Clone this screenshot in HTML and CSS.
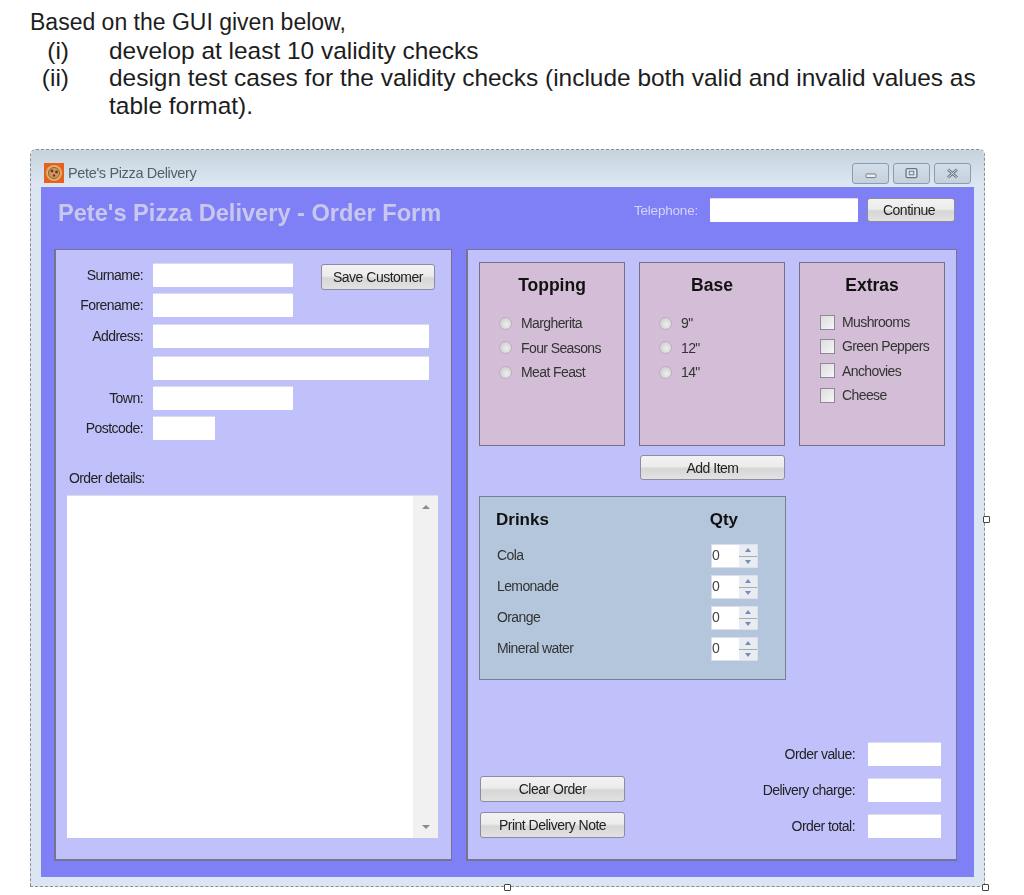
FILE: index.html
```html
<!DOCTYPE html>
<html lang="en">
<head>
<meta charset="utf-8">
<title>Pete's Pizza Delivery</title>
<link rel="stylesheet" href="styles.css">
</head>
<body>
<section class="question">
  <p class="intro">Based on the GUI given below,</p>
  <ol class="tasks">
    <li class="task"><span class="marker">(i)</span><span>develop at least 10 validity checks</span></li>
    <li class="task"><span class="marker">(ii)</span><span>design test cases for the validity checks (include both valid and invalid values as table format).</span></li>
  </ol>
</section>

<div class="window">
  <div class="titlebar">
    <svg class="app-icon" viewBox="0 0 20 20" aria-hidden="true">
      <rect width="20" height="20" fill="#e8601c"/>
      <circle cx="10" cy="10" r="8" fill="#d9b070"/>
      <circle cx="10" cy="10" r="5.5" fill="#c99a62" stroke="#a05a30"/>
      <circle cx="8" cy="8" r="1.4" fill="#8a2a18"/>
      <circle cx="12.5" cy="9" r="1.4" fill="#7a2a18"/>
      <circle cx="10" cy="12.5" r="1.2" fill="#8a2a18"/>
    </svg>
    <span class="window-title">Pete's Pizza Delivery</span>
    <div class="window-controls">
      <span class="win-btn"><svg viewBox="0 0 36 21" aria-hidden="true"><rect x="13" y="11" width="11" height="4" rx="1" fill="#e8eef4" stroke="#68737f"/></svg></span>
      <span class="win-btn"><svg viewBox="0 0 36 21" aria-hidden="true"><rect x="12" y="5" width="12" height="10" rx="1.5" fill="#dfe7ee" stroke="#68737f" stroke-width="1.4"/><rect x="15.500" y="8" width="5" height="4" fill="none" stroke="#68737f"/></svg></span>
      <span class="win-btn"><svg viewBox="0 0 36 21" aria-hidden="true"><path d="M13 6l10 9M23 6l-10 9" stroke="#68737f" stroke-width="3"/><path d="M13 6l10 9M23 6l-10 9" stroke="#eef2f6" stroke-width="1"/></svg></span>
    </div>
  </div>

  <div class="client">
    <header class="form-header">
      <h1 class="form-title">Pete's Pizza Delivery - Order Form</h1>
      <span class="tel-label">Telephone:</span>
      <input class="field tel-field" type="text">
      <button class="btn continue-btn">Continue</button>
    </header>

    <div class="panels">
      <section class="panel customer">
        <div class="customer-grid">
          <label class="lbl">Surname:</label><input class="field w-short" type="text"><button class="btn save-btn">Save Customer</button>
          <label class="lbl">Forename:</label><input class="field w-short wide-cell" type="text">
          <label class="lbl">Address:</label><input class="field w-long wide-cell" type="text">
          <span></span><input class="field w-long wide-cell" type="text">
          <label class="lbl">Town:</label><input class="field w-short wide-cell" type="text">
          <label class="lbl">Postcode:</label><input class="field w-post wide-cell" type="text">
        </div>
        <div class="order-label">Order details:</div>
        <div class="order-box">
          <div class="scrollbar"><span class="arrow-up"></span><span class="arrow-down"></span></div>
        </div>
      </section>

      <section class="panel order">
        <div class="choices">
          <div class="choice-box">
            <h2 class="box-title">Topping</h2>
            <div class="opt"><span class="radio"></span>Margherita</div>
            <div class="opt"><span class="radio"></span>Four Seasons</div>
            <div class="opt"><span class="radio"></span>Meat Feast</div>
          </div>
          <div class="choice-box">
            <h2 class="box-title">Base</h2>
            <div class="opt"><span class="radio"></span>9"</div>
            <div class="opt"><span class="radio"></span>12"</div>
            <div class="opt"><span class="radio"></span>14"</div>
          </div>
          <div class="choice-box">
            <h2 class="box-title">Extras</h2>
            <div class="opt opt-check"><span class="check"></span>Mushrooms</div>
            <div class="opt opt-check"><span class="check"></span>Green Peppers</div>
            <div class="opt opt-check"><span class="check"></span>Anchovies</div>
            <div class="opt opt-check"><span class="check"></span>Cheese</div>
          </div>
        </div>
        <div class="add-row"><button class="btn add-btn">Add Item</button></div>

        <div class="drinks">
          <div class="drinks-head"><span>Drinks</span><span>Qty</span></div>
          <div class="drink"><span class="drink-name">Cola</span><span class="spinner"><span class="spin-val">0</span><span class="spin-btns"><i class="up"></i><i class="down"></i></span></span></div>
          <div class="drink"><span class="drink-name">Lemonade</span><span class="spinner"><span class="spin-val">0</span><span class="spin-btns"><i class="up"></i><i class="down"></i></span></span></div>
          <div class="drink"><span class="drink-name">Orange</span><span class="spinner"><span class="spin-val">0</span><span class="spin-btns"><i class="up"></i><i class="down"></i></span></span></div>
          <div class="drink"><span class="drink-name">Mineral water</span><span class="spinner"><span class="spin-val">0</span><span class="spin-btns"><i class="up"></i><i class="down"></i></span></span></div>
        </div>

        <div class="order-foot">
          <div class="foot-buttons">
            <button class="btn foot-btn">Clear Order</button>
            <button class="btn foot-btn">Print Delivery Note</button>
          </div>
          <div class="totals">
            <label class="lbl">Order value:</label><input class="field total-field" type="text">
            <label class="lbl">Delivery charge:</label><input class="field total-field" type="text">
            <label class="lbl">Order total:</label><input class="field total-field" type="text">
          </div>
        </div>
      </section>
    </div>
  </div>

  <span class="handle handle-e"></span>
  <span class="handle handle-s"></span>
  <span class="handle handle-se"></span>
</div>
</body>
</html>
```

FILE: styles.css
```css
* { box-sizing: border-box; }
html, body { margin: 0; padding: 0; background: #fff; }
body { font-family: "Liberation Sans", Arial, sans-serif; color: #222; height: 895px; overflow: hidden; }

.question { height: 149px; padding: 9px 40px 0 30px; font-size: 23px; line-height: 27.5px; color: #1d1d1d; }
.intro { margin: 0; }
.tasks { margin: 0; padding: 0; list-style: none; font-size: 24.450px; }
.task { display: grid; grid-template-columns: 39px 1fr; column-gap: 40px; }
.marker { text-align: right; }

.window { position: relative; margin-left: 30px; width: 955px; height: 738px; border: 1px dashed #8d8d8d; border-radius: 6px 6px 0 0; background: #dbe6f2; filter: blur(.7px); }
.titlebar { display: flex; align-items: center; height: 37px; padding: 0 13px 0 13px; background: linear-gradient(#c6d3dd, #dde8f3); border-radius: 6px 6px 0 0; }
.app-icon { width: 20px; height: 20px; margin-top: 9px; flex: none; }
.window-title { margin: 9px 0 0 4px; font-size: 14.500px; color: #555f68; letter-spacing: -.35px; }
.window-controls { display: flex; gap: 4px; margin: 10px 0 0 auto; }
.win-btn { display: block; width: 37px; height: 21px; border: 1px solid #8b9bb0; border-radius: 3px; background: linear-gradient(#d3dee8, #c4d0dc); }
.win-btn svg { display: block; width: 35px; height: 19px; }

.client { display: flex; flex-direction: column; height: 690px; margin: 0 10px; padding: 0 17px 16px 13px; background: #8080f6; }
.form-header { display: flex; align-items: center; height: 62px; padding: 0 2px 16px 4px; }
.form-title { margin: 7px auto 0 0; font-size: 23.600px; font-weight: 700; color: #c8c8ee; }
.tel-label { margin-right: 12px; font-size: 13.500px; letter-spacing: -.2px; color: #d4d4f6; }
.tel-field { width: 148px; }

.field { display: block; height: 24px; margin: 0; padding: 0; border: 0; border-top: 1px solid #dcdce8; background: #fff; border-radius: 1px; }
.btn { display: block; margin: 0; padding: 0; font-family: "Liberation Sans", Arial, sans-serif; font-size: 14px; letter-spacing: -.5px; color: #222; border: 1px solid #8c8c9c; border-radius: 3px; background: linear-gradient(#f2f2f2 0, #ececec 45%, #d6d6d6 55%, #e2e2e2 100%); }
.continue-btn { width: 88px; height: 24px; margin-left: 9px; padding-right: 4px; }
.lbl { font-size: 14px; letter-spacing: -.55px; color: #222; text-align: right; }

.panels { display: flex; gap: 14px; flex: 1; }
.panel { display: flex; flex-direction: column; height: 612px; background: #c0c0fb; border: 1px solid #757590; border-width: 1px 1px 2px 2px; }

.customer { width: 398px; padding: 13px 13px 21px 11px; }
.customer-grid { display: grid; grid-template-columns: 76px 140px 28px 1fr; grid-template-rows: 30px 31px 32px 30px 30px 24px; align-items: start; }
.customer-grid .lbl { line-height: 24px; }
.customer-grid .field { margin-left: 10px; }
.wide-cell { grid-column: 2 / 5; }
.w-short { width: 140px; }
.w-long { width: 276px; }
.w-post { width: 62px; }
.save-btn { width: 114px; height: 26px; margin: 1px 0 0 10px; grid-column: 4; justify-self: start; white-space: nowrap; }
.order-label { margin: 29px 0 0 2px; height: 18px; font-size: 14px; letter-spacing: -.6px; line-height: 18px; color: #222; }
.order-box { display: flex; justify-content: flex-end; width: 371px; height: 343px; margin: 8px 0 0 0; background: #fff; border-top: 1px solid #dcdce8; }
.scrollbar { display: flex; flex-direction: column; justify-content: space-between; align-items: center; width: 25px; padding: 9px 0 9px; background: #f1f1f1; }
.arrow-up { width: 0; height: 0; border: 4px solid transparent; border-top: 0; border-bottom: 4px solid #8c8c8c; }
.arrow-down { width: 0; height: 0; border: 4px solid transparent; border-bottom: 0; border-top: 4px solid #8c8c8c; }

.order { width: 491px; padding: 12px 11px 21px 11px; }
.choices { display: flex; gap: 14px; }
.choice-box { width: 146px; height: 184px; padding: 12px 0 0 0; background: #d4bdd6; border: 1px solid #77707f; }
.box-title { margin: 0 0 16px; font-size: 17.500px; line-height: 20px; font-weight: 700; text-align: center; color: #111; }
.opt { display: flex; align-items: center; height: 24.500px; padding-left: 19px; font-size: 14px; letter-spacing: -.6px; color: #333; }
.radio { width: 13px; height: 13px; margin-right: 9px; flex: none; border-radius: 50%; border: 1px solid #b9b0bd; background: radial-gradient(circle at 60% 60%, #eee, #c8c2cc); }
.opt-check { padding-left: 20px; position: relative; top: -1px; height: 24.300px; }
.check { width: 15px; height: 15px; margin-right: 7px; flex: none; border: 1px solid #8d8894; background: linear-gradient(135deg, #ddd, #f6f6f6); }

.add-row { display: flex; padding-left: 161px; margin-top: 9px; }
.add-btn { width: 145px; height: 25px; }

.drinks { width: 307px; height: 184px; margin-top: 16px; padding: 12px 27px 0 16px; background: #b4c6dc; border: 1px solid #77808f; }
.drinks-head { display: flex; justify-content: space-between; height: 21px; margin-bottom: 14px; padding-right: 20px; font-size: 17px; line-height: 21px; font-weight: 700; color: #111; }
.drink { display: flex; justify-content: space-between; align-items: center; height: 31px; padding: 0 0 7px 1px; font-size: 14px; letter-spacing: -.6px; color: #333; }
.drink-name { margin-bottom: 2px; }
.spinner { display: flex; width: 47px; height: 24px; background: #fff; border: 1px solid #dde; }
.spin-val { flex: 1; font-size: 14px; line-height: 21px; color: #444; letter-spacing: 0; }
.spin-btns { display: flex; flex-direction: column; width: 18px; background: #e8edf2; }
.spin-btns i { display: flex; flex: 1; align-items: center; justify-content: center; border-bottom: 1px solid #a8a8b0; }
.spin-btns i::before { content: ""; width: 0; height: 0; border: 3px solid transparent; }
.spin-btns .up::before { border-top: 0; border-bottom: 4px solid #7e88b8; }
.spin-btns .down::before { border-bottom: 0; border-top: 4px solid #7e88b8; }
.spin-btns i.down { border-bottom: 0; }

.order-foot { display: flex; justify-content: space-between; align-items: flex-end; margin-top: auto; padding: 0 4px 0 1px; }
.foot-buttons { display: flex; flex-direction: column; gap: 10px; }
.foot-btn { width: 145px; height: 26px; }
.totals { display: grid; grid-template-columns: auto 73px; column-gap: 13px; row-gap: 12px; align-items: center; }
.total-field { width: 73px; }

.handle { position: absolute; width: 7px; height: 7px; background: #fff; border: 1px solid #444; border-radius: 1px; }
.handle-e { top: 366px; right: -6px; }
.handle-s { bottom: -5px; left: 473px; }
.handle-se { bottom: -5px; right: -5px; }
```
